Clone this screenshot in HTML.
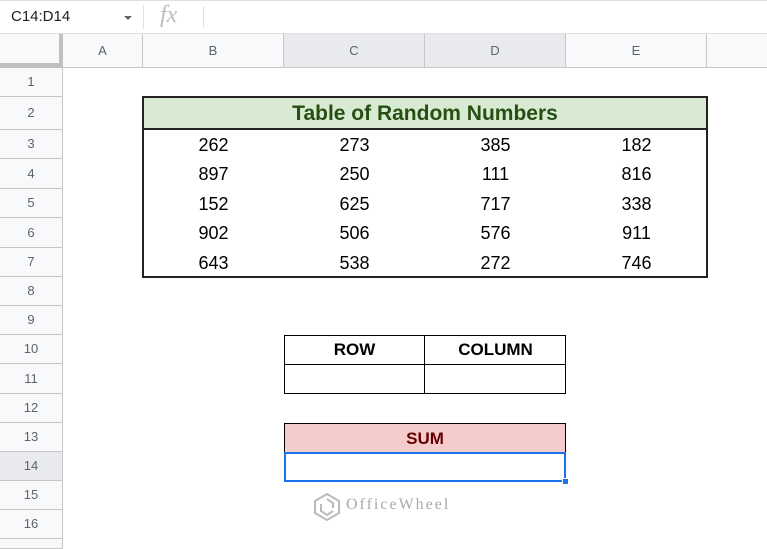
<!DOCTYPE html>
<html><head><meta charset="utf-8"><style>
*{margin:0;padding:0;box-sizing:border-box}
body{width:767px;height:544px;overflow:hidden;background:#fff;font-family:"Liberation Sans",Arial,sans-serif;position:relative}
.a{position:absolute}
.ch{position:absolute;top:34px;height:34px;background:#f8f9fa;border-right:1px solid #c7c7c7;border-bottom:1px solid #c7c7c7;color:#5f6368;font-size:13px;text-align:center;line-height:33px}
.rh{position:absolute;left:0;width:63px;background:#f8f9fa;border-right:1px solid #c7c7c7;border-bottom:1px solid #c7c7c7;color:#5f6368;font-size:13px;text-align:center}
.sel{background:#e8eaed}
.n{position:absolute;width:141px;text-align:center;font-size:18px;color:#000}
</style></head><body>
<div class="a" style="left:0;top:0;width:767px;height:34px;border-top:1px solid #e0e0e0;border-bottom:1px solid #e0e0e0;background:#fff"></div>
<div class="a" style="left:11px;top:8px;font-size:15px;color:#202124">C14:D14</div>
<div class="a" style="left:124px;top:16px;width:0;height:0;border-left:4px solid transparent;border-right:4px solid transparent;border-top:4px solid #666"></div>
<div class="a" style="left:143px;top:5px;width:1px;height:24px;background:#e0e0e0"></div>
<div class="a" style="left:160px;top:2px;font-family:'Liberation Serif',serif;font-style:italic;font-size:24px;color:#bdbdbd">fx</div>
<div class="a" style="left:203px;top:6px;width:1px;height:22px;background:#e0e0e0"></div>
<div class="a" style="left:0;top:34px;width:63px;height:34px;background:#f8f9fa;border-bottom:1px solid #c7c7c7"></div>
<div class="a" style="left:59px;top:34px;width:4px;height:34px;background:#c0c0c0"></div>
<div class="a" style="left:0;top:63px;width:63px;height:5px;background:#c0c0c0"></div>
<div class="ch" style="left:63px;width:80px">A</div>
<div class="ch" style="left:143px;width:141px">B</div>
<div class="ch sel" style="left:284px;width:141px">C</div>
<div class="ch sel" style="left:425px;width:141px">D</div>
<div class="ch" style="left:566px;width:141px">E</div>
<div class="ch" style="left:707px;width:60px;border-right:none"></div>
<div class="rh" style="top:68px;height:29px;line-height:28px">1</div>
<div class="rh" style="top:97px;height:33px;line-height:32px">2</div>
<div class="rh" style="top:130px;height:29px;line-height:28px">3</div>
<div class="rh" style="top:159px;height:30px;line-height:29px">4</div>
<div class="rh" style="top:189px;height:29px;line-height:28px">5</div>
<div class="rh" style="top:218px;height:30px;line-height:29px">6</div>
<div class="rh" style="top:248px;height:29px;line-height:28px">7</div>
<div class="rh" style="top:277px;height:29px;line-height:28px">8</div>
<div class="rh" style="top:306px;height:29px;line-height:28px">9</div>
<div class="rh" style="top:335px;height:29px;line-height:28px">10</div>
<div class="rh" style="top:364px;height:30px;line-height:29px">11</div>
<div class="rh" style="top:394px;height:29px;line-height:28px">12</div>
<div class="rh" style="top:423px;height:29px;line-height:28px">13</div>
<div class="rh sel" style="top:452px;height:29px;line-height:28px">14</div>
<div class="rh" style="top:481px;height:29px;line-height:28px">15</div>
<div class="rh" style="top:510px;height:29px;line-height:28px">16</div>
<div class="rh" style="top:539px;height:10px"></div>
<div class="a" style="left:142px;top:96px;width:566px;height:182px;border:2px solid #222"></div>
<div class="a" style="left:144px;top:98px;width:562px;height:32px;background:#d9ead3;border-bottom:2px solid #222;color:#274e13;font-weight:bold;font-size:21px;text-align:center;line-height:31px">Table of Random Numbers</div>
<div class="n" style="left:143px;top:135px">262</div><div class="n" style="left:284px;top:135px">273</div><div class="n" style="left:425px;top:135px">385</div><div class="n" style="left:566px;top:135px">182</div>
<div class="n" style="left:143px;top:164px">897</div><div class="n" style="left:284px;top:164px">250</div><div class="n" style="left:425px;top:164px">111</div><div class="n" style="left:566px;top:164px">816</div>
<div class="n" style="left:143px;top:194px">152</div><div class="n" style="left:284px;top:194px">625</div><div class="n" style="left:425px;top:194px">717</div><div class="n" style="left:566px;top:194px">338</div>
<div class="n" style="left:143px;top:223px">902</div><div class="n" style="left:284px;top:223px">506</div><div class="n" style="left:425px;top:223px">576</div><div class="n" style="left:566px;top:223px">911</div>
<div class="n" style="left:143px;top:253px">643</div><div class="n" style="left:284px;top:253px">538</div><div class="n" style="left:425px;top:253px">272</div><div class="n" style="left:566px;top:253px">746</div>
<div class="a" style="left:284px;top:335px;width:282px;height:59px;border:1px solid #000"></div>
<div class="a" style="left:284px;top:364px;width:282px;height:1px;background:#000"></div>
<div class="a" style="left:424px;top:335px;width:1px;height:59px;background:#000"></div>
<div class="a" style="left:284px;top:340px;width:141px;text-align:center;font-weight:bold;font-size:17px">ROW</div>
<div class="a" style="left:425px;top:340px;width:141px;text-align:center;font-weight:bold;font-size:17px">COLUMN</div>
<div class="a" style="left:284px;top:423px;width:282px;height:30px;border:1px solid #000;background:#f4cccc;color:#660000;font-weight:bold;font-size:17px;text-align:center;line-height:29px">SUM</div>
<div class="a" style="left:284px;top:452px;width:282px;height:30px;border:2px solid #1a73e8"></div>
<div class="a" style="left:562px;top:478px;width:7px;height:7px;background:#1a73e8;border:1px solid #fff"></div>
<svg class="a" style="left:312px;top:492px" width="30" height="30" viewBox="0 0 30 30"><path d="M15 2 L27 9 V21 L15 28 L3 21 V9 Z" fill="none" stroke="#bbb" stroke-width="2"/><path d="M9 12 V19 L15 23 L21 19 M15 7 L21 11 V16" fill="none" stroke="#bbb" stroke-width="2"/></svg>
<div class="a" style="left:346px;top:496px;font-family:'Liberation Serif',serif;font-size:16px;letter-spacing:2px;color:#aaa">OfficeWheel</div>
</body></html>
